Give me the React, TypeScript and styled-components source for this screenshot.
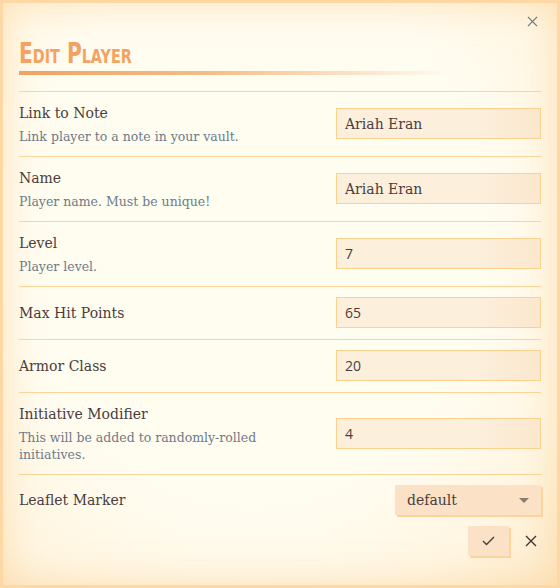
import styled, { createGlobalStyle } from 'styled-components'

const GlobalStyle = createGlobalStyle`
	html, body {
		margin: 0;
		padding: 0;
		background: #fffbef;
	}
	* {
		box-sizing: border-box;
	}
`

const Modal = styled.div`
	position: relative;
	width: 560px;
	height: 588px;
	border: 3px solid #fdd8a4;
	background: radial-gradient(ellipse at 45% 40%, #fffcf0 55%, #fff6e2 80%, #fde9c8 100%);
	box-shadow: inset 0 0 36px rgba(252, 206, 140, 0.55);
	padding: 0 16px;
	font-family: 'DejaVu Serif', 'Liberation Serif', serif;
	color: #4a3d3d;
`

const CloseButton = styled.button`
	position: absolute;
	top: 9px;
	right: 16px;
	width: 18px;
	height: 18px;
	padding: 0;
	border: none;
	background: none;
	display: flex;
	align-items: center;
	justify-content: center;
	color: #6b7883;
`

const Title = styled.h2`
	margin: 0;
	padding-top: 36px;
	height: 68px;
	font-family: 'DejaVu Sans Condensed', 'Liberation Sans Narrow', sans-serif;
	font-stretch: condensed;
	font-weight: 700;
	font-size: 28px;
	line-height: 30px;
	font-variant: small-caps;
	color: #f4a261;
`

const TitleText = styled.span`
	display: inline-block;
	transform: scaleX(0.8);
	transform-origin: left center;
`

const TitleBar = styled.div`
	height: 4px;
	width: 430px;
	background: linear-gradient(to right, #f2a160 0%, #f6bd88 45%, rgba(253, 236, 210, 0) 100%);
`

const Settings = styled.div`
	margin-top: 16px;
`

const Row = styled.div`
	display: flex;
	align-items: center;
	gap: 24px;
	padding: 10px 0 11px;
	border-top: 1px solid #fcd49a;
`

const Info = styled.div`
	flex: 1;
	min-width: 0;
	display: flex;
	flex-direction: column;
	gap: 4px;
`

const Label = styled.div`
	font-size: 14px;
	line-height: 22px;
	color: #4a3d3d;
`

const Description = styled.div`
	font-size: 12.5px;
	line-height: 17px;
	color: #6e7b89;
`

const TextInput = styled.input<{ $numeric?: boolean }>`
	width: 205px;
	height: 31px;
	padding: 0 8px;
	border: 1px solid #fcd08f;
	background: linear-gradient(to right, #fcefdc 70%, #fbe7cd 100%);
	color: #4a3d3d;
	font-family: ${(p) =>
		p.$numeric ? "'Open Sans', 'Noto Sans', sans-serif" : "'DejaVu Serif', 'Liberation Serif', serif"};
	font-size: 14px;
	outline: none;
`

const SelectBox = styled.div`
	position: relative;
	width: 146px;
	height: 30px;
	display: flex;
	align-items: center;
	padding: 0 12px;
	background: #fbe2c6;
	box-shadow: 2px 2px 0 #fcd39a;
	font-family: 'DejaVu Serif', 'Liberation Serif', serif;
	font-size: 14px;
	color: #4a3d3d;
`

const Caret = styled.span`
	position: absolute;
	right: 12px;
	top: 13px;
	width: 0;
	height: 0;
	border-left: 5px solid transparent;
	border-right: 5px solid transparent;
	border-top: 5px solid #8c7b6e;
`

const Footer = styled.div`
	display: flex;
	justify-content: flex-end;
	align-items: center;
	gap: 12px;
`

const ConfirmButton = styled.button`
	width: 41px;
	height: 30px;
	border: none;
	padding: 0;
	background: #fbe2c6;
	box-shadow: 2px 2px 0 #fcd39a;
	display: flex;
	align-items: center;
	justify-content: center;
	color: #4a3d3d;
`

const CancelButton = styled.button`
	width: 20px;
	height: 30px;
	border: none;
	padding: 0;
	background: none;
	display: flex;
	align-items: center;
	justify-content: center;
	color: #3f3535;
`

const XIcon = ({ size = 11 }: { size?: number }) => (
	<svg width={size} height={size} viewBox="0 0 12 12" fill="none" stroke="currentColor" strokeWidth="1.4">
		<path d="M1 1 L11 11 M11 1 L1 11" />
	</svg>
)

const CheckIcon = () => (
	<svg width="13" height="10" viewBox="0 0 13 10" fill="none" stroke="currentColor" strokeWidth="1.4">
		<path d="M1 5 L4.5 8.5 L12 1" />
	</svg>
)

interface Field {
	label: string
	desc?: string
	value: string
	numeric?: boolean
}

const fields: Field[] = [
	{ label: 'Link to Note', desc: 'Link player to a note in your vault.', value: 'Ariah Eran' },
	{ label: 'Name', desc: 'Player name. Must be unique!', value: 'Ariah Eran' },
	{ label: 'Level', desc: 'Player level.', value: '7', numeric: true },
	{ label: 'Max Hit Points', value: '65', numeric: true },
	{ label: 'Armor Class', value: '20', numeric: true },
	{
		label: 'Initiative Modifier',
		desc: 'This will be added to randomly-rolled initiatives.',
		value: '4',
		numeric: true,
	},
]

const App = () => {
	return (
		<>
			<GlobalStyle />
			<Modal>
				<CloseButton aria-label="Close">
					<XIcon />
				</CloseButton>
				<Title>
					<TitleText>Edit Player</TitleText>
				</Title>
				<TitleBar />
				<Settings>
					{fields.map((field) => (
						<Row key={field.label}>
							<Info>
								<Label>{field.label}</Label>
								{field.desc && <Description>{field.desc}</Description>}
							</Info>
							<TextInput $numeric={field.numeric} defaultValue={field.value} />
						</Row>
					))}
					<Row>
						<Info>
							<Label>Leaflet Marker</Label>
						</Info>
						<SelectBox>
							default
							<Caret />
						</SelectBox>
					</Row>
				</Settings>
				<Footer>
					<ConfirmButton aria-label="Save">
						<CheckIcon />
					</ConfirmButton>
					<CancelButton aria-label="Cancel">
						<XIcon size={12} />
					</CancelButton>
				</Footer>
			</Modal>
		</>
	)
}

export default App
